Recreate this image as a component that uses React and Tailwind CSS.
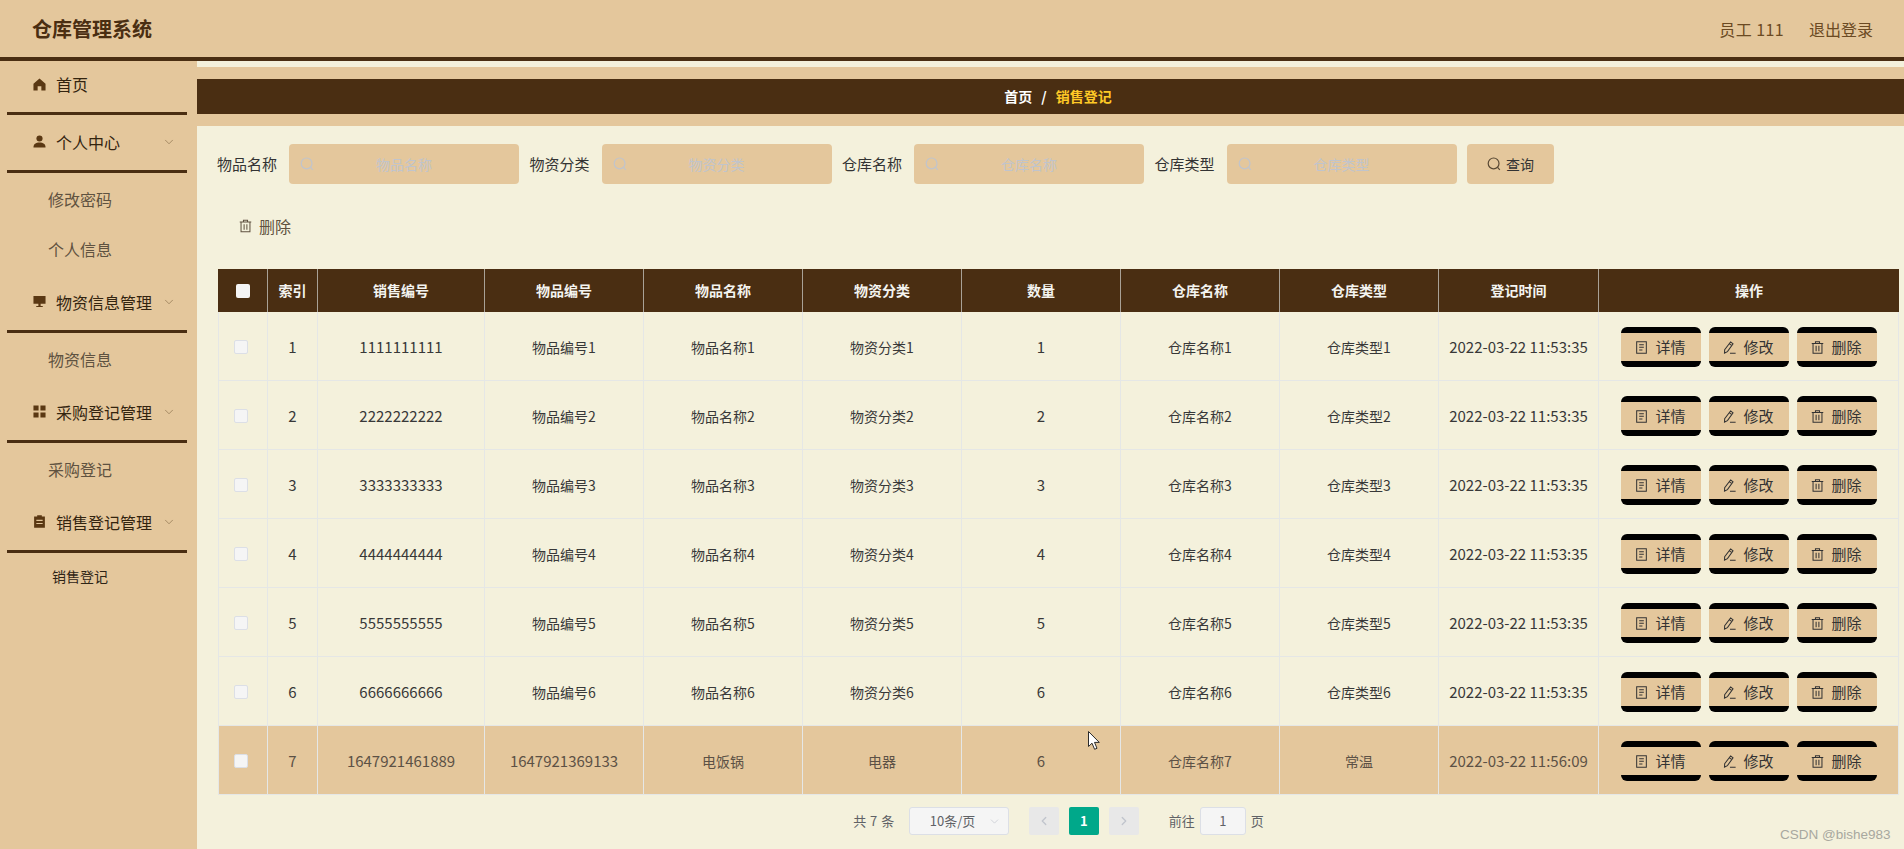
import { ChevronDown, ChevronLeft, ChevronRight } from "lucide-react";

const rows = [
  { id: 1, no: "1111111111", goodsNo: "物品编号1", goods: "物品名称1", cate: "物资分类1", num: 1, store: "仓库名称1", type: "仓库类型1", time: "2022-03-22 11:53:35" },
  { id: 2, no: "2222222222", goodsNo: "物品编号2", goods: "物品名称2", cate: "物资分类2", num: 2, store: "仓库名称2", type: "仓库类型2", time: "2022-03-22 11:53:35" },
  { id: 3, no: "3333333333", goodsNo: "物品编号3", goods: "物品名称3", cate: "物资分类3", num: 3, store: "仓库名称3", type: "仓库类型3", time: "2022-03-22 11:53:35" },
  { id: 4, no: "4444444444", goodsNo: "物品编号4", goods: "物品名称4", cate: "物资分类4", num: 4, store: "仓库名称4", type: "仓库类型4", time: "2022-03-22 11:53:35" },
  { id: 5, no: "5555555555", goodsNo: "物品编号5", goods: "物品名称5", cate: "物资分类5", num: 5, store: "仓库名称5", type: "仓库类型5", time: "2022-03-22 11:53:35" },
  { id: 6, no: "6666666666", goodsNo: "物品编号6", goods: "物品名称6", cate: "物资分类6", num: 6, store: "仓库名称6", type: "仓库类型6", time: "2022-03-22 11:53:35" },
  { id: 7, no: "1647921461889", goodsNo: "1647921369133", goods: "电饭锅", cate: "电器", num: 6, store: "仓库名称7", type: "常温", time: "2022-03-22 11:56:09", hover: true },
];

const columns = ["销售编号", "物品编号", "物品名称", "物资分类", "数量", "仓库名称", "仓库类型", "登记时间", "操作"];

function SearchIcon({ className }) {
  return (
    <svg viewBox="0 0 14 14" fill="none" stroke="currentColor" strokeWidth="1.2" className={className}>
      <circle cx="6.6" cy="6.4" r="5.4" />
      <path d="M10.6 10.4 L12.8 12.8" />
    </svg>
  );
}

function TrashIcon({ className }) {
  return (
    <svg viewBox="0 0 14 14" fill="none" stroke="currentColor" strokeWidth="1.1" className={className}>
      <path d="M0.8 2.8 H13.2 M4.8 2.8 V0.8 H9.2 V2.8 M2.2 2.8 V13.3 H11.8 V2.8 M5.5 5 V11 M8.5 5 V11" />
    </svg>
  );
}

function TicketIcon({ className }) {
  return (
    <svg viewBox="0 0 14 14" fill="none" stroke="currentColor" strokeWidth="1.1" className={className}>
      <path d="M1.8 0.8 H12.2 V13.2 H1.8 Z M4.5 4 H9.5 M4.5 6.8 H9.5 M4.5 9.8 H8" />
    </svg>
  );
}

function EditIcon({ className }) {
  return (
    <svg viewBox="0 0 14 14" fill="none" stroke="currentColor" strokeWidth="1.1" className={className}>
      <path d="M8.2 1 L10.8 3 L4.8 11.4 L1.6 13 L1.8 9.3 Z M7 3 L9.6 5 M7.5 13.3 H13.6" />
    </svg>
  );
}

function HomeIcon() {
  return (
    <svg viewBox="0 0 14 14" fill="currentColor" className="w-[13px] h-[13px]">
      <path d="M7 0.5 L13.5 6.2 V13.5 H9 V9 H5 V13.5 H0.5 V6.2 Z" />
    </svg>
  );
}

function UserIcon() {
  return (
    <svg viewBox="0 0 14 14" fill="currentColor" className="w-[13px] h-[13px]">
      <circle cx="7" cy="3.8" r="3.3" />
      <path d="M0.5 13.5 C0.5 9.5 3 8 7 8 C11 8 13.5 9.5 13.5 13.5 Z" />
    </svg>
  );
}

function MonitorIcon() {
  return (
    <svg viewBox="0 0 14 14" fill="currentColor" className="w-[13px] h-[13px]">
      <path d="M0.5 1 H13.5 V9.5 H8.2 V11.8 H10.5 V13 H3.5 V11.8 H5.8 V9.5 H0.5 Z" />
    </svg>
  );
}

function GridIcon() {
  return (
    <svg viewBox="0 0 14 14" fill="currentColor" className="w-[13px] h-[13px]">
      <path d="M0.5 0.5 H6 V6 H0.5 Z M8 0.5 H13.5 V6 H8 Z M0.5 8 H6 V13.5 H0.5 Z M8 8 H13.5 V13.5 H8 Z" />
    </svg>
  );
}

function OrderIcon() {
  return (
    <svg viewBox="0 0 14 14" fill="currentColor" fillRule="evenodd" className="w-[13px] h-[13px]">
      <path d="M4.5 0.3 H9.5 V1.6 H12.8 V13.7 H1.2 V1.6 H4.5 Z M3.6 5.2 V6.4 H10.4 V5.2 Z M3.6 8.6 V9.8 H10.4 V8.6 Z" />
    </svg>
  );
}

function MenuTitle({ icon, label, arrow = true, className = "h-[55px] pb-[2px]" }) {
  return (
    <>
      <div className={`flex items-center pl-[33px] pr-[21px] text-[16px] text-[#33240f] ${className}`}>
        <span className="w-[23px] text-[#5a3813]">{icon}</span>
        <span className="flex-1">{label}</span>
        {arrow && <ChevronDown className="w-[14px] h-[14px] text-[#8f7550]" strokeWidth={1.25} />}
      </div>
      <div className="ml-[7px] mr-[10px] h-[3px] bg-[#4a2e12]" />
    </>
  );
}

function SubItem({ label }) {
  return (
    <div className="h-[50px] flex items-center pl-[48px] pb-[2px] text-[16px] text-[#5f5240]">{label}</div>
  );
}

function Sidebar() {
  return (
    <aside className="w-[197px] shrink-0 bg-[#e4c79c]">
      <MenuTitle icon={<HomeIcon />} label="首页" arrow={false} className="h-[51px] pb-[5px]" />
      <MenuTitle icon={<UserIcon />} label="个人中心" />
      <div className="pt-[2px]">
        <SubItem label="修改密码" />
        <SubItem label="个人信息" />
      </div>
      <MenuTitle icon={<MonitorIcon />} label="物资信息管理" />
      <div className="pt-[2px]">
        <SubItem label="物资信息" />
      </div>
      <MenuTitle icon={<GridIcon />} label="采购登记管理" />
      <div className="pt-[2px]">
        <SubItem label="采购登记" />
      </div>
      <MenuTitle icon={<OrderIcon />} label="销售登记管理" />
      <div className="pt-[2px]">
        <div className="h-[44px] flex items-center pl-[52px] pb-[2px] text-[14px] text-[#2e2416]">销售登记</div>
      </div>
    </aside>
  );
}

function SearchField({ label }) {
  return (
    <div className="flex items-center gap-[12px]">
      <span className="w-[60px] text-[15px] text-[#333333]">{label}</span>
      <div className="relative w-[230px] h-[40px] rounded-[4px] bg-[#e4c79c] flex items-center justify-center text-[14px] text-[#c0c4cc]">
        <SearchIcon className="absolute left-[11px] top-[13px] w-[14px] h-[14px]" />
        {label}
      </div>
    </div>
  );
}

function ActionButton({ icon, label }) {
  return (
    <button className="w-[80px] h-[40px] rounded-[6px] border-y-[6px] border-black bg-[#e4c79c] flex items-center justify-center gap-[7px] text-[15px] text-[#333333]">
      {icon}
      {label}
    </button>
  );
}

function Cell({ children, className = "" }) {
  return <td className={`border-r border-b border-[#e5e7e6] pt-[2px] text-center ${className}`}>{children}</td>;
}

function DataTable() {
  return (
    <table className="w-[1681px] table-fixed border-separate border-spacing-0">
      <colgroup>
        <col className="w-[50px]" />
        <col className="w-[50px]" />
        <col className="w-[167px]" />
        <col className="w-[159px]" />
        <col className="w-[159px]" />
        <col className="w-[159px]" />
        <col className="w-[159px]" />
        <col className="w-[159px]" />
        <col className="w-[159px]" />
        <col className="w-[160px]" />
        <col className="w-[300px]" />
      </colgroup>
      <thead>
        <tr className="h-[43px] bg-[#4a2e12] text-[14px] font-bold text-[#f4f4f0]">
          <th className="border-r border-[#a9a196] pl-[18px]">
            <div className="w-[14px] h-[14px] rounded-[2px] bg-[#f5f5f5]" />
          </th>
          <th className="border-r border-[#a9a196]">索引</th>
          {columns.map((c, idx) => (
            <th key={c} className={idx === columns.length - 1 ? "" : "border-r border-[#a9a196]"}>
              {c}
            </th>
          ))}
        </tr>
      </thead>
      <tbody>
        {rows.map((r) => (
          <tr key={r.id} className={`h-[69px] ${r.hover ? "bg-[#e4c79c] text-[#5c5145]" : "text-[#383838]"}`}>
            <td className="border-l border-r border-b border-[#e5e7e6] pt-[2px] pl-[15px]">
              <div className="w-[14px] h-[14px] rounded-[2px] border border-[#dcdfe6] bg-[#f5f5f5]" />
            </td>
            <Cell className="text-[15px]">{r.id}</Cell>
            <Cell className="text-[15px]">{r.no}</Cell>
            <Cell className={r.hover ? "text-[15px]" : "text-[14px]"}>{r.goodsNo}</Cell>
            <Cell className="text-[14px]">{r.goods}</Cell>
            <Cell className="text-[14px]">{r.cate}</Cell>
            <Cell className="text-[15px]">{r.num}</Cell>
            <Cell className="text-[14px]">{r.store}</Cell>
            <Cell className="text-[14px]">{r.type}</Cell>
            <Cell className="text-[15px]">{r.time}</Cell>
            <Cell>
              <div className="flex justify-center gap-[8px]">
                <ActionButton icon={<TicketIcon className="w-[13px] h-[13px]" />} label="详情" />
                <ActionButton icon={<EditIcon className="w-[13px] h-[13px]" />} label="修改" />
                <ActionButton icon={<TrashIcon className="w-[13px] h-[13px]" />} label="删除" />
              </div>
            </Cell>
          </tr>
        ))}
      </tbody>
    </table>
  );
}

function Pagination() {
  return (
    <div className="mt-[12px] pr-[5px] flex items-center justify-center text-[13px] text-[#606266]">
      <span className="mr-[14px] tracking-[0.5px]">共 7 条</span>
      <div className="relative w-[100px] h-[28px] rounded-[3px] border border-[#dcdfe6] bg-[#f5f5f5] flex items-center pl-[20px] mr-[20px]">
        10条/页
        <ChevronDown className="absolute right-[7px] top-[7px] w-[13px] h-[13px] text-[#c0c4cc]" strokeWidth={1.25} />
      </div>
      <div className="w-[30px] h-[28px] rounded-[2px] bg-[#e8e8e8] flex items-center justify-center text-[#c0c4cc]">
        <ChevronLeft className="w-[14px] h-[14px]" strokeWidth={2.25} />
      </div>
      <div className="w-[30px] h-[28px] mx-[10px] rounded-[2px] bg-[#00a88a] flex items-center justify-center font-bold text-white">1</div>
      <div className="w-[30px] h-[28px] rounded-[2px] bg-[#e8e8e8] flex items-center justify-center text-[#c0c4cc]">
        <ChevronRight className="w-[14px] h-[14px]" strokeWidth={2.25} />
      </div>
      <span className="ml-[30px]">前往</span>
      <div className="w-[46px] h-[28px] mx-[5px] rounded-[3px] border border-[#dcdfe6] bg-[#f5f5f5] flex items-center justify-center">1</div>
      <span>页</span>
    </div>
  );
}

export default function App() {
  return (
    <div className="relative h-[849px] flex flex-col overflow-hidden bg-[#f4f1dc] font-['Noto_Sans_CJK_SC',sans-serif]">
      <header className="h-[61px] shrink-0 border-b-4 border-[#4a2e12] bg-[#e4c79c] flex items-center justify-between pl-[32px] pr-[31px]">
        <div className="text-[20px] font-bold text-[#4a2e12]">仓库管理系统</div>
        <div className="flex gap-[25px] text-[16px] text-[#6b4a23]">
          <span className="tracking-[0.4px]">员工 111</span>
          <span>退出登录</span>
        </div>
      </header>
      <div className="flex flex-1">
        <Sidebar />
        <main className="flex-1">
          <div className="mt-[6px] py-[12px] bg-[#e4c79c]">
            <div className="h-[35px] bg-[#4a2e12] flex items-center justify-center gap-[9px] pl-[15px] text-[14px] font-bold">
              <span className="text-white">首页</span>
              <span className="text-white">/</span>
              <span className="text-[#ffc926]">销售登记</span>
            </div>
          </div>
          <div className="pt-[18px] pl-[20px] flex items-center gap-[10.5px]">
            <SearchField label="物品名称" />
            <SearchField label="物资分类" />
            <SearchField label="仓库名称" />
            <SearchField label="仓库类型" />
            <button className="w-[87px] h-[40px] rounded-[4px] bg-[#e4c79c] flex items-center justify-center gap-[5px] text-[14px] text-[#333333]">
              <SearchIcon className="w-[14px] h-[14px] text-[#5a4a35]" />
              查询
            </button>
          </div>
          <button className="mt-[22px] ml-[42px] h-[40px] flex items-center gap-[7px] text-[16px] text-[#5f5240]">
            <TrashIcon className="w-[13px] h-[14px]" />
            删除
          </button>
          <div className="mt-[23px] pl-[21px]">
            <DataTable />
            <Pagination />
          </div>
        </main>
      </div>
      <svg viewBox="0 0 12 19" className="absolute left-[1088px] top-[731px] w-[12px] h-[19px]">
        <path d="M0.5 0.5 V15.5 L4 12.2 L6.6 18.3 L9 17.3 L6.5 11.4 L11.3 11.4 Z" fill="white" stroke="#2b2b2b" strokeWidth="1" />
      </svg>
      <div className="absolute left-[1780px] top-[825px] text-[13.5px] text-[#a8a89f] font-['Liberation_Sans',sans-serif]">CSDN @bishe983</div>
    </div>
  );
}
